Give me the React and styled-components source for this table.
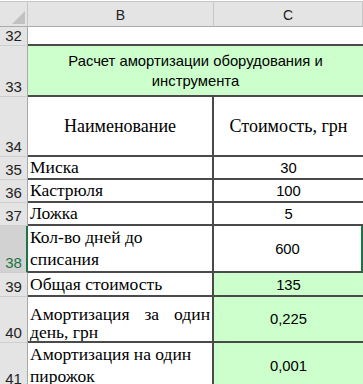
import React from "react";
import styled, { createGlobalStyle, css } from "styled-components";

const Global = createGlobalStyle`
  html, body { margin: 0; padding: 0; background: #fff; overflow: hidden; }
  #root { width: 363px; height: 384px; overflow: hidden; }
`;

const BORDER = "#4a4a4a";
const GREEN_FILL = "#ccffcc";

const TopStrip = styled.div`
  height: 1px;
  background: #fff;
`;

const Sheet = styled.div`
  display: grid;
  grid-template-columns: 28px 186px 149px;
  grid-template-rows: 26px 19px 51px 60px 23px 23px 23px 47px 24px 46px 46px;
`;

const Corner = styled.div`
  position: relative;
  background: #e4e4e4;
  border-top: 1px solid #c6c6c6;
  border-bottom: 1px solid #ababab;
  border-right: 1px solid #c6c6c6;
  box-sizing: border-box;
`;

const CornerTriangle = styled.div`
  position: absolute;
  right: 2px;
  bottom: 2px;
  width: 0;
  height: 0;
  border-left: 13px solid transparent;
  border-bottom: 13px solid #c2c2c2;
`;

const ColHeader = styled.div`
  background: #e4e4e4;
  border-top: 1px solid #c6c6c6;
  border-bottom: 1px solid #ababab;
  border-right: 1px solid #c6c6c6;
  box-sizing: border-box;
  display: flex;
  align-items: center;
  justify-content: center;
  font-family: "Liberation Sans", Arial, sans-serif;
  font-size: 14px;
  color: #222;
  padding-top: 1px;
`;

const RowHeader = styled.div`
  background: ${(p) => (p.$active ? "#d2d2d2" : "#e4e4e4")};
  color: ${(p) => (p.$active ? "#217346" : "#222")};
  border-bottom: 1px solid #cfcfcf;
  border-right: ${(p) => (p.$active ? "2px solid #217346" : "1px solid #a8a8a8")};
  box-sizing: border-box;
  display: flex;
  align-items: flex-end;
  justify-content: center;
  font-family: "Liberation Sans", Arial, sans-serif;
  font-size: 15px;
  line-height: 17px;
  padding-bottom: 1px;
  padding-left: ${(p) => (p.$active ? "1px" : "0")};
`;

const Cell = styled.div`
  box-sizing: border-box;
  background: ${(p) => (p.$fill ? GREEN_FILL : "#fff")};
  border-bottom: ${(p) => (p.$noBorder ? "none" : `2px solid ${BORDER}`)};
  border-right: ${(p) => (p.$right ? `2px solid ${BORDER}` : "none")};
  grid-column: ${(p) => p.$span || "auto"};
  display: flex;
  flex-direction: column;
  overflow: hidden;
  justify-content: ${(p) =>
    p.$v === "top" ? "flex-start" : p.$v === "center" ? "center" : "flex-end"};
  text-align: ${(p) => p.$align || "left"};
  padding: 0 2px 0 2px;
  ${(p) =>
    p.$selected &&
    css`
      border-right: 2px solid #217346;
    `}
`;

const SerifText = styled.div`
  font-family: "Liberation Serif", "Times New Roman", serif;
  font-size: ${(p) => (p.$large ? "18px" : "17.5px")};
  line-height: ${(p) => (p.$tight ? "18px" : "22px")};
  color: #000;
`;

const Line = styled.div`
  text-align: ${(p) => (p.$justify ? "justify" : "inherit")};
  text-align-last: ${(p) => (p.$justify ? "justify" : "auto")};
  white-space: nowrap;
`;

const SansText = styled.div`
  font-family: "Liberation Sans", Arial, sans-serif;
  font-size: 14.8px;
  line-height: 20px;
  color: #000;
`;

const rows = [
  { n: 35, name: "Миска", value: "30" },
  { n: 36, name: "Кастрюля", value: "100" },
  { n: 37, name: "Ложка", value: "5" },
];

export default function App() {
  return (
    <>
      <Global />
      <TopStrip />
      <Sheet>
        <Corner>
          <CornerTriangle />
        </Corner>
        <ColHeader>B</ColHeader>
        <ColHeader>C</ColHeader>

        <RowHeader>32</RowHeader>
        <Cell $span="2 / 4" />

        <RowHeader>33</RowHeader>
        <Cell $span="2 / 4" $fill $v="center" $align="center">
          <SansText>
            <Line>Расчет амортизации оборудования и</Line>
            <Line>инструмента</Line>
          </SansText>
        </Cell>

        <RowHeader>34</RowHeader>
        <Cell $right $v="center" $align="center">
          <SerifText $large>Наименование</SerifText>
        </Cell>
        <Cell $v="center" $align="center">
          <SerifText $large>Стоимость, грн</SerifText>
        </Cell>

        {rows.map((r) => (
          <React.Fragment key={r.n}>
            <RowHeader>{r.n}</RowHeader>
            <Cell $right>
              <SerifText>{r.name}</SerifText>
            </Cell>
            <Cell $align="center">
              <SansText>{r.value}</SansText>
            </Cell>
          </React.Fragment>
        ))}

        <RowHeader $active>38</RowHeader>
        <Cell $right $v="top">
          <SerifText>
            <Line>Кол-во дней до</Line>
            <Line>списания</Line>
          </SerifText>
        </Cell>
        <Cell $v="center" $align="center" $selected>
          <SansText>600</SansText>
        </Cell>

        <RowHeader>39</RowHeader>
        <Cell $right>
          <SerifText>Общая стоимость</SerifText>
        </Cell>
        <Cell $fill $align="center">
          <SansText>135</SansText>
        </Cell>

        <RowHeader>40</RowHeader>
        <Cell $right>
          <SerifText $tight>
            <Line $justify>Амортизация за один</Line>
            <Line>день, грн</Line>
          </SerifText>
        </Cell>
        <Cell $fill $v="center" $align="center">
          <SansText>0,225</SansText>
        </Cell>

        <RowHeader>41</RowHeader>
        <Cell $right $v="top" $noBorder>
          <SerifText>
            <Line>Амортизация на один</Line>
            <Line>пирожок</Line>
          </SerifText>
        </Cell>
        <Cell $fill $v="center" $align="center" $noBorder>
          <SansText>0,001</SansText>
        </Cell>
      </Sheet>
    </>
  );
}
